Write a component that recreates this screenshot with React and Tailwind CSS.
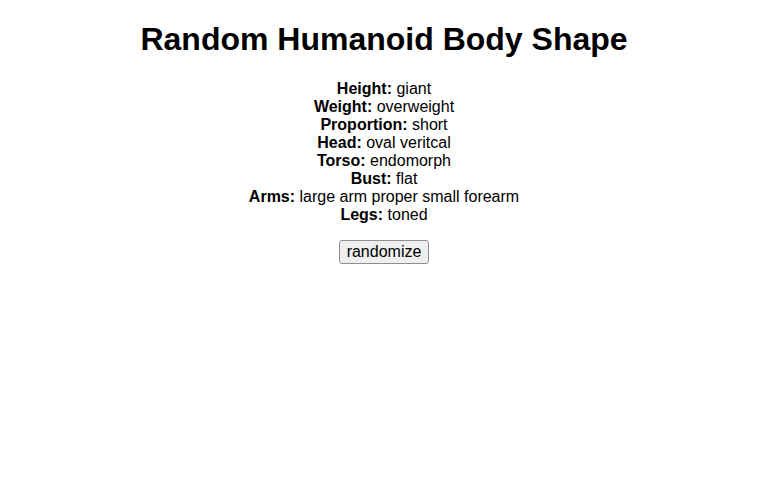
const traits = [
  ["Height", "giant"],
  ["Weight", "overweight"],
  ["Proportion", "short"],
  ["Head", "oval veritcal"],
  ["Torso", "endomorph"],
  ["Bust", "flat"],
  ["Arms", "large arm proper small forearm"],
  ["Legs", "toned"],
];

export default function App() {
  return (
    <div className="min-h-screen bg-white text-black text-center font-['Liberation_Sans',Arial,sans-serif]">
      <h1 className="text-[32px] font-bold leading-[36.8px] my-[21.44px]">Random Humanoid Body Shape</h1>

      {/* trait list */}
      <div className="text-[16px] leading-[18px]">
        {traits.map(([label, value]) => (
          <div key={label}>
            <b className="font-bold">{label}:</b> {value}
          </div>
        ))}
      </div>

      <div className="mt-4">
        <button className="text-[16px] leading-[18.4px] px-[7px] py-[2px] bg-[#efefef] border border-[#8f8f8f] rounded-[3px] text-black">
          randomize
        </button>
      </div>
    </div>
  );
}
